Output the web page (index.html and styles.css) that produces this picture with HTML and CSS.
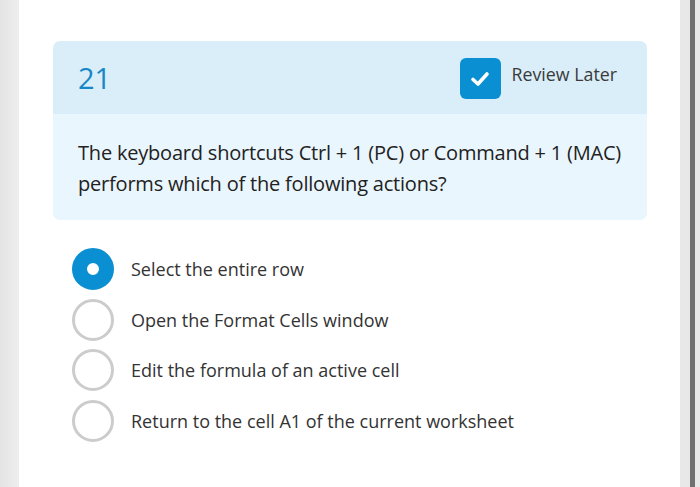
FILE: index.html
```html
<!DOCTYPE html>
<html>

<head>
    <link rel="stylesheet" href="styles.css">
</head>

<body>
    <div class="screen">
        <div class="edge-left"></div>
        <div class="page">
            <div class="question">
                <div class="question-head">
                    <span class="number">21</span>
                    <label class="review">
                        <span class="checkbox">
                            <svg width="22" height="22" viewBox="0 0 22 22">
                                <path d="M4 11.5 L9 16 L18 6" fill="none" stroke="#ffffff" stroke-width="3.6" stroke-linecap="round" stroke-linejoin="round" />
                            </svg>
                        </span>
                        <span class="review-text">Review Later</span>
                    </label>
                </div>
                <div class="question-body">
                    The keyboard shortcuts Ctrl + 1 (PC) or Command + 1 (MAC) performs which of the following actions?
                </div>
            </div>

            <ul class="options">
                <li class="option selected"><span class="radio"></span>Select the entire row</li>
                <li class="option"><span class="radio"></span>Open the Format Cells window</li>
                <li class="option"><span class="radio"></span>Edit the formula of an active cell</li>
                <li class="option"><span class="radio"></span>Return to the cell A1 of the current worksheet</li>
            </ul>
        </div>
        <div class="edge-right"></div>
    </div>
</body>

</html>
```

FILE: styles.css
```css
html, body {
    margin: 0;
    padding: 0;
}

body {
    font-family: "Open Sans", "Noto Sans", sans-serif;
    color: #333333;
    background-color: #e9e9e9;
}

.screen {
    display: flex;
    width: 700px;
    height: 487px;
    overflow: hidden;
}

.edge-left {
    width: 19px;
    background: linear-gradient(to right, #e4e4e4, #eeeeee);
}

.page {
    width: 661px;
    background-color: #ffffff;
    padding: 41px 33px 0 34px;
    box-sizing: border-box;
}

.edge-right {
    width: 20px;
    background-color: #e8e8e8;
    border-right: 5px solid #e8e8e8;
    box-sizing: border-box;
    position: relative;
}

.edge-right::after {
    content: "";
    position: absolute;
    top: 0;
    bottom: 0;
    left: 10px;
    width: 5px;
    background-color: #707070;
}

.question {
    border-radius: 7px;
    overflow: hidden;
}

.question-head {
    height: 73px;
    background-color: #d9eef8;
    display: flex;
    align-items: center;
    justify-content: space-between;
    padding: 0 30px 0 25px;
}

.number {
    font-size: 29px;
    font-weight: 500;
    color: #1787c8;
    margin-top: 0;
}

.review {
    display: flex;
    align-items: center;
    gap: 11px;
    margin-top: 2px;
}

.checkbox {
    width: 41px;
    height: 41px;
    border-radius: 6px;
    background-color: #0b8fd3;
    display: flex;
    align-items: center;
    justify-content: center;
}

.review-text {
    font-size: 17.8px;
    color: #3a3a3a;
    margin-top: -10px;
}

.question-body {
    background-color: #eaf6fd;
    padding: 23px 25px 21px 25px;
    font-size: 20px;
    line-height: 31px;
    color: #222222;
    letter-spacing: -0.2px;
}

.options {
    list-style: none;
    margin: 24px 0 0 0;
    padding: 0 0 0 19px;
}

.option {
    display: flex;
    align-items: center;
    height: 50.5px;
    font-size: 18px;
    color: #333333;
}

.radio {
    width: 36px;
    height: 36px;
    border: 3px solid #cccccc;
    border-radius: 50%;
    background-color: #ffffff;
    margin-right: 17px;
    flex-shrink: 0;
}

.selected .radio {
    width: 12px;
    height: 12px;
    border: 15px solid #0b8fd3;
}
```
